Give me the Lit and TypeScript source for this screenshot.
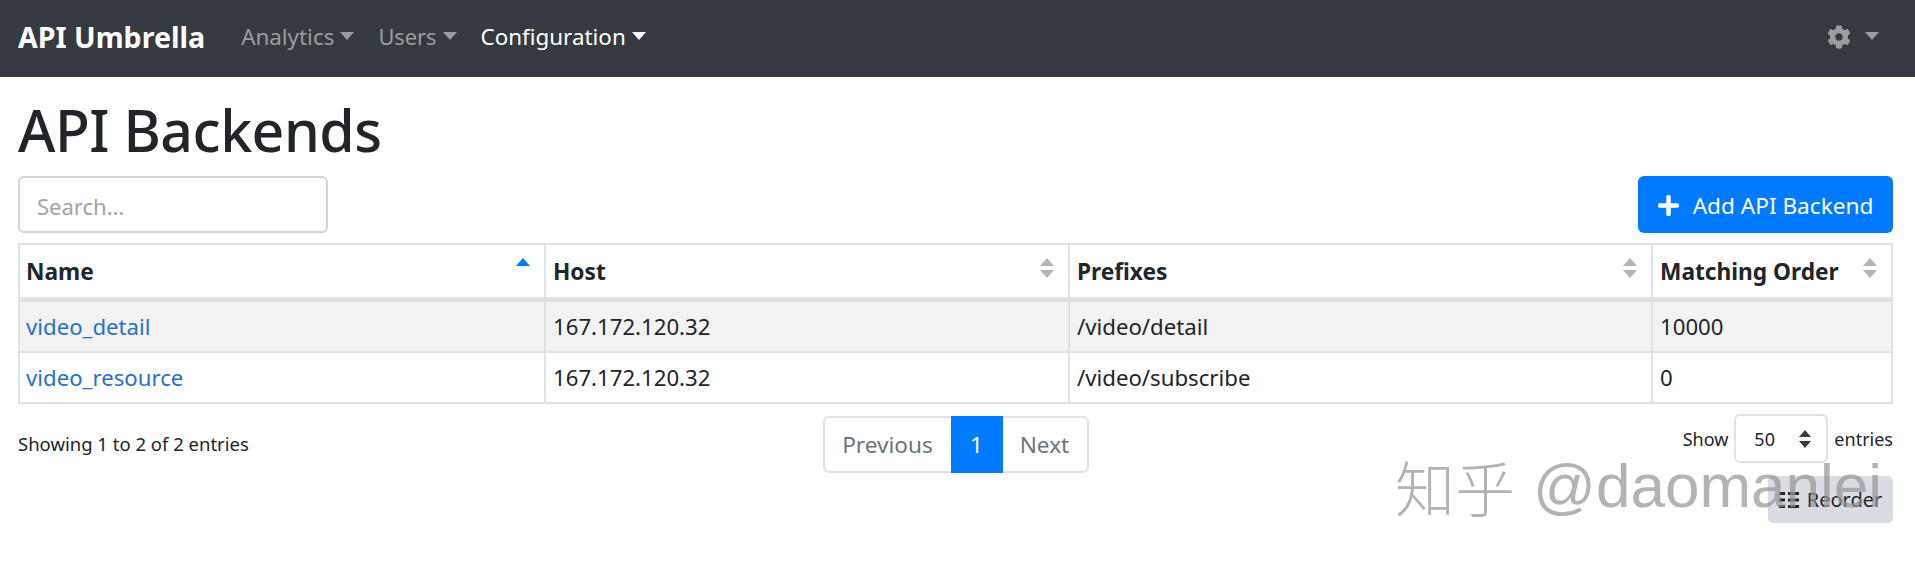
import { LitElement, html, css } from "lit";
import { customElement } from "lit/decorators.js";

const caret = html`<span class="caret"></span>`;
const sort = html`<svg class="sort" width="14" height="20" viewBox="0 0 14 20"><path d="M7 0 14 8H0z" fill="#b3b3b3"/><path d="M7 20 0 12H14z" fill="#b3b3b3"/></svg>`;

@customElement("app-root")
export class AppRoot extends LitElement {
  static styles = css`
    :host { display: block; position: relative; height: 565px; overflow: hidden; background: #fff; color: #212529; font-family: "Noto Sans", sans-serif; font-size: 22px; }
    nav { height: 77px; background: #343a40; display: flex; align-items: center; padding: 0 18px 4px; box-sizing: border-box; }
    .brand { color: #fff; font-weight: 700; font-size: 28.6px; margin-right: 36px; }
    .item { display: flex; align-items: center; color: #9a9da0; font-size: 22.4px; margin-right: 24px; }
    .item.users { font-size: 21.8px; }
    .item.on { color: #fff; }
    .caret { width: 0; height: 0; border-left: 7px solid transparent; border-right: 7px solid transparent; border-top: 8px solid currentColor; margin-left: 6px; margin-top: -2px; }
    .grow { flex: 1; }
    .gear { display: flex; align-items: center; color: #9a9da0; margin-right: 18px; gap: 8px; }
    main { padding: 0 22px 0 18px; }
    h1 { margin: 19px 0 0; height: 80px; font-size: 57.2px; line-height: 68px; font-weight: 500; letter-spacing: -0.5px; }
    .bar { display: flex; justify-content: space-between; align-items: center; height: 57px; }
    .search { width: 310px; height: 57px; box-sizing: border-box; border: 2px solid #ced4da; border-radius: 6px; display: flex; align-items: center; padding: 2px 17px 0; color: #9ea4a9; font-size: 22px; }
    .add { width: 255px; height: 57px; box-sizing: border-box; background: #007bff; color: #fff; border-radius: 6px; display: flex; align-items: center; justify-content: center; gap: 14px; font-size: 22.6px; padding: 2px 0 0 0; }
    table { width: 1875px; margin-top: 10px; border-collapse: collapse; table-layout: fixed; border: 2px solid #dee2e6; font-size: 22.2px; }
    th, td { border: 2px solid #dee2e6; padding: 0 6px 0 7px; text-align: left; height: 51px; box-sizing: border-box; }
    th:first-child, td:first-child { padding-left: 6px; }
    th { height: 55px; padding-top: 2px; border-bottom-width: 5px; position: relative; font-weight: 700; font-size: 22.7px; }
    .sort, .sorted { position: absolute; right: 14px; top: 13px; }
    tr.odd td { background: #f2f2f2; height: 53px; }
    a { color: #2a70c8; }
    .foot { display: grid; grid-template-columns: 1fr auto 1fr; align-items: start; margin-top: 10px; }
    .info { font-size: 18.5px; margin-top: 17px; }
    .pages { display: flex; height: 57px; margin-top: 2px; color: #6c757d; font-size: 22.6px; }
    .pages > div { display: flex; align-items: center; justify-content: center; box-sizing: border-box; border: 2px solid #dee2e6; }
    .prev { width: 128px; border-right: 0 !important; border-radius: 6px 0 0 6px; }
    .cur { width: 52px; background: #007bff; border-color: #007bff !important; color: #fff; }
    .next { width: 86px; border-left: 0 !important; border-radius: 0 6px 6px 0; }
    .right { display: flex; flex-direction: column; align-items: flex-end; }
    .len { display: flex; align-items: center; gap: 6px; font-size: 18px; }
    .sel { width: 94px; height: 49px; box-sizing: border-box; border: 2px solid #dee2e6; border-radius: 6px; display: flex; align-items: center; justify-content: space-between; padding: 0 15px 0 18px; }
    .reorder { margin-top: 13px; width: 125px; height: 47px; box-sizing: border-box; background: #d9dde3; border-radius: 5px; display: flex; align-items: center; justify-content: center; gap: 8px; font-size: 20px; }
    .mark { position: absolute; left: 1395px; top: 450px; font-size: 60px; line-height: 72px; color: rgba(150,150,150,.72); font-family: "Noto Sans CJK SC", sans-serif; font-weight: 300; white-space: nowrap; pointer-events: none; display: flex; gap: 18px; }
    .mark b { font-family: "Liberation Sans", sans-serif; font-weight: 400; font-size: 62px; }
  `;

  render() {
    return html`
      <nav>
        <div class="brand">API Umbrella</div>
        <div class="item">Analytics${caret}</div>
        <div class="item users">Users${caret}</div>
        <div class="item on">Configuration${caret}</div>
        <div class="grow"></div>
        <div class="gear">
          <svg width="24" height="24" viewBox="0 0 512 512" fill="currentColor"><path d="M487.400 315.700l-42.600-24.600c4.300-23.200 4.300-47 0-70.200l42.600-24.600c4.900-2.800 7.100-8.600 5.500-14-11.100-35.600-30-67.800-54.700-94.600-3.800-4.100-10-5.100-14.800-2.300L380.800 110c-17.900-15.400-38.500-27.300-60.800-35.100V25.800c0-5.600-3.900-10.500-9.400-11.700-36.700-8.200-74.300-7.800-109.200 0-5.500 1.200-9.400 6.100-9.400 11.700V75c-22.200 7.900-42.800 19.800-60.800 35.100L88.700 85.500c-4.900-2.800-11-1.900-14.800 2.300-24.700 26.700-43.600 58.900-54.700 94.600-1.700 5.400.6 11.200 5.500 14L67.300 221c-4.300 23.200-4.300 47 0 70.200l-42.600 24.600c-4.900 2.800-7.100 8.600-5.500 14 11.100 35.600 30 67.800 54.700 94.600 3.800 4.100 10 5.100 14.800 2.300l42.600-24.600c17.900 15.400 38.500 27.300 60.800 35.100v49.200c0 5.600 3.900 10.500 9.400 11.700 36.700 8.200 74.300 7.800 109.200 0 5.500-1.200 9.400-6.100 9.400-11.700v-49.200c22.200-7.900 42.800-19.800 60.800-35.100l42.600 24.600c4.900 2.800 11 1.900 14.800-2.300 24.700-26.700 43.600-58.900 54.700-94.600 1.500-5.500-.7-11.300-5.600-14.100zM256 336c-44.100 0-80-35.900-80-80s35.900-80 80-80 80 35.900 80 80-35.900 80-80 80z"/></svg>
          ${caret}
        </div>
      </nav>
      <main>
        <h1>API Backends</h1>
        <div class="bar">
          <div class="search">Search...</div>
          <div class="add">
            <svg width="21" height="21" viewBox="0 0 21 21"><path d="M10.500 2v17M2 10.500h17" stroke="#fff" stroke-width="4.500" stroke-linecap="round"/></svg>
            Add API Backend
          </div>
        </div>
        <table>
          <colgroup><col style="width:526px"/><col style="width:524px"/><col style="width:583px"/><col/></colgroup>
          <thead><tr>
            <th>Name<svg class="sorted" width="14" height="8" viewBox="0 0 14 8"><path d="M7 0 14 8H0z" fill="#007bff"/></svg></th>
            <th>Host${sort}</th><th>Prefixes${sort}</th><th>Matching Order${sort}</th>
          </tr></thead>
          <tbody>
            <tr class="odd"><td><a>video_detail</a></td><td>167.172.120.32</td><td>/video/detail</td><td>10000</td></tr>
            <tr><td><a>video_resource</a></td><td>167.172.120.32</td><td>/video/subscribe</td><td>0</td></tr>
          </tbody>
        </table>
        <div class="foot">
          <div class="info">Showing 1 to 2 of 2 entries</div>
          <div class="pages"><div class="prev">Previous</div><div class="cur">1</div><div class="next">Next</div></div>
          <div class="right">
            <div class="len">Show <div class="sel">50
              <svg width="12" height="18" viewBox="0 0 12 18"><path d="M6 0 12 7H0zM6 18 0 11H12z" fill="#343a40"/></svg></div> entries</div>
            <div class="reorder">
              <svg width="20" height="18" viewBox="0 0 20 18" fill="#212529"><path d="M0 1h6v3H0zM9 1h11v3H9zM0 7.500h6v3H0zM9 7.500h11v3H9zM0 14h6v3H0zM9 14h11v3H9z"/></svg>
              Reorder
            </div>
          </div>
        </div>
      </main>
      <div class="mark"><span>知乎</span><b>@daomanlei</b></div>
    `;
  }
}
